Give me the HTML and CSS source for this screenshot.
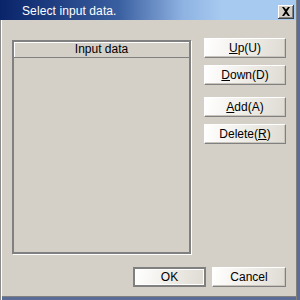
FILE: index.html
```html
<!DOCTYPE html>
<html>
<head>
<meta charset="utf-8">
<link rel="stylesheet" href="styles.css">
</head>
<body>
<div class="window">
  <div class="titlebar">
    <span class="title">Select input data.</span>
    <span class="close"><svg width="10" height="9" viewBox="0 0 10 9"><path d="M1 0h2l2 2.5L7 0h2L6 4.5 9 9H7L5 6.5 3 9H1l3-4.5z" fill="#000"/></svg></span>
  </div>
  <div class="main">
    <div class="list">
      <div class="list-head">Input data</div>
      <div class="list-body"></div>
    </div>
    <div class="side">
      <button class="btn"><u>U</u>p(U)</button>
      <button class="btn gap-small"><u>D</u>own(D)</button>
      <button class="btn gap-large"><u>A</u>dd(A)</button>
      <button class="btn gap-small">Delete(<u>R</u>)</button>
    </div>
  </div>
  <div class="footer">
    <button class="btn btn-default">OK</button>
    <button class="btn btn-cancel">Cancel</button>
  </div>
</div>
</body>
</html>
```
FILE: styles.css
```css
html, body {
  margin: 0;
  padding: 0;
  width: 300px;
  height: 300px;
  overflow: hidden;
}
body {
  font-family: "Liberation Sans", Arial, sans-serif;
  font-size: 12px;
  color: #000;
}
.window {
  width: 300px;
  height: 300px;
  box-sizing: border-box;
  background: #d4d0c8;
  display: flex;
  flex-direction: column;
  box-shadow: inset 1px 0 0 #8a8a8a, inset 2px 0 0 #ffffff,
              inset -3px 0 0 #5b6d96, inset -4px 0 0 #808080,
              inset 0 -3px 0 #5b6d96, inset 0 -4px 0 #808080;
}
.titlebar {
  height: 20px;
  margin-right: 4px;
  background: linear-gradient(to right, #0a246a 0%, #3a5fa0 40%, #8fb3e2 62%, #a6caf0 75%, #a6caf0 100%);
  display: flex;
  align-items: center;
  justify-content: space-between;
  box-sizing: border-box;
  padding: 1px 2px 0 22px;
}
.title {
  color: #fff;
  font-size: 12px;
  letter-spacing: 0.1px;
}
.close {
  width: 16px;
  height: 14px;
  box-sizing: border-box;
  background: #d4d0c8;
  display: flex;
  align-items: center;
  justify-content: center;
  box-shadow: inset -1px -1px 0 #404040, inset 1px 1px 0 #ffffff, inset -2px -2px 0 #808080;
  margin-top: 2px;
}
.main {
  display: flex;
  align-items: flex-start;
  padding: 18px 0 0 12px;
}
.list {
  width: 179px;
  height: 214px;
  margin-top: 2px;
  box-sizing: border-box;
  border: 2px solid #808080;
  box-shadow: 1px 1px 0 #ffffff;
  display: flex;
  flex-direction: column;
}
.list-head {
  height: 16px;
  box-sizing: border-box;
  text-align: center;
  line-height: 15px;
  border-bottom: 1px solid #808080;
  box-shadow: inset 1px 1px 0 #ffffff;
}
.list-body {
  flex: 1;
}
.side {
  display: flex;
  flex-direction: column;
  margin-left: 13px;
}
.btn {
  font-family: "Liberation Sans", Arial, sans-serif;
  font-size: 12px;
  color: #000;
  width: 82px;
  height: 20px;
  padding: 0;
  margin: 0;
  box-sizing: border-box;
  border: 1px solid;
  border-color: #ffffff #808080 #808080 #ffffff;
  background: linear-gradient(100deg, #ffffff 0%, #f1efea 45%, #dedbd3 100%);
  box-shadow: inset -1px -1px 0 #c8c4bb;
  text-align: center;
  line-height: 17px;
}
.btn u {
  text-decoration: underline;
}
.gap-small { margin-top: 7px; }
.gap-large { margin-top: 12px; }
.footer {
  display: flex;
  justify-content: flex-end;
  gap: 6px;
  padding: 13px 14px 0 0;
}
.btn-default {
  width: 73px;
  border: 2px solid #808080;
  box-shadow: inset -1px -1px 0 #ffffff, inset 1px 1px 0 #ffffff;
}
.btn-cancel {
  width: 74px;
}
```
